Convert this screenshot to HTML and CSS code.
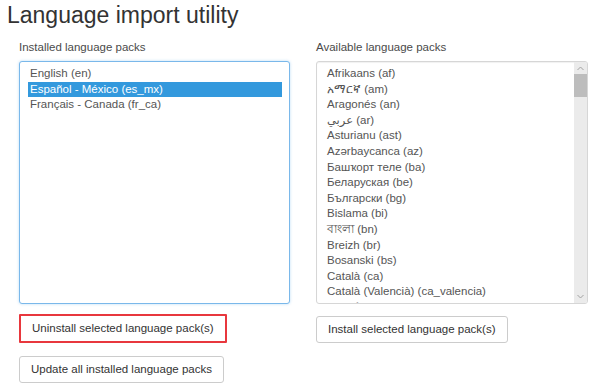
FILE: index.html
```html
<!DOCTYPE html>
<html lang="en">
<head>
<meta charset="utf-8">
<title>Language import utility</title>
<link rel="stylesheet" href="styles.css">
</head>
<body>
<h1 class="title">Language import utility</h1>
<div class="columns">
  <div class="col">
    <div class="label">Installed language packs</div>
    <div class="listbox focused">
      <ul class="options">
        <li>English (en)</li>
        <li class="selected">Español - México (es_mx)</li>
        <li>Français - Canada (fr_ca)</li>
      </ul>
    </div>
    <button class="btn btn-marked">Uninstall selected language pack(s)</button>
    <button class="btn btn-second">Update all installed language packs</button>
  </div>
  <div class="col">
    <div class="label">Available language packs</div>
    <div class="listbox">
      <ul class="options">
        <li>Afrikaans (af)</li>
        <li>አማርኛ (am)</li>
        <li>Aragonés (an)</li>
        <li>عربي (ar)</li>
        <li>Asturianu (ast)</li>
        <li>Azərbaycanca (az)</li>
        <li>Башҡорт теле (ba)</li>
        <li>Беларуская (be)</li>
        <li>Български (bg)</li>
        <li>Bislama (bi)</li>
        <li>বাংলা (bn)</li>
        <li>Breizh (br)</li>
        <li>Bosanski (bs)</li>
        <li>Català (ca)</li>
        <li>Català (Valencià) (ca_valencia)</li>
        <li>کوردی (ckb)</li>
      </ul>
      <div class="scrollbar">
        <svg class="arrow" width="13" height="12" viewBox="0 0 13 12"><polyline points="3.5,8 6.5,5 9.5,8" fill="none" stroke="#a3a3a3" stroke-width="1"/></svg>
        <div class="thumb"></div>
        <div class="track-rest"></div>
        <svg class="arrow" width="13" height="12" viewBox="0 0 13 12"><polyline points="3.5,4 6.5,7 9.5,4" fill="none" stroke="#a3a3a3" stroke-width="1"/></svg>
      </div>
    </div>
    <button class="btn btn-install">Install selected language pack(s)</button>
  </div>
</div>
</body>
</html>
```
FILE: styles.css
```css
html, body {
  margin: 0;
  padding: 0;
  background: #ffffff;
}

body {
  font-family: "Liberation Sans", Arial, "Noto Sans", "DejaVu Sans", sans-serif;
  color: #333333;
  width: 600px;
  height: 392px;
  overflow: hidden;
}

.title {
  margin: 0;
  padding: 1px 0 0 7px;
  font-size: 23px;
  font-weight: normal;
  line-height: 28px;
  height: 39px;
  color: #333333;
}

.columns {
  display: grid;
  grid-template-columns: 271px 272px;
  column-gap: 26px;
  padding-left: 19px;
}

.col {
  display: flex;
  flex-direction: column;
  align-items: flex-start;
}

.label {
  font-size: 11.5px;
  line-height: 14px;
  color: #4a4a4a;
  margin-bottom: 7px;
}

.listbox {
  box-sizing: border-box;
  width: 100%;
  height: 243px;
  border: 1px solid #d6d6d6;
  border-radius: 3px;
  box-shadow: inset 0 1px 1px rgba(0, 0, 0, 0.06);
  display: flex;
  overflow: hidden;
  background: #fff;
}

.listbox.focused {
  border-color: #7ab8ea;
  box-shadow: 0 0 3px rgba(102, 175, 233, 0.45);
}

.options {
  list-style: none;
  margin: 0;
  padding: 4px 7px 0 8px;
  flex: 1;
  min-width: 0;
  overflow: hidden;
  font-size: 11.5px;
  line-height: 15.6px;
  color: #555555;
}

.options li {
  padding-left: 2px;
  white-space: nowrap;
}

.options li.selected {
  background: #3399dd;
  color: #ffffff;
}

.scrollbar {
  width: 13px;
  flex: none;
  background: #ebebeb;
  display: flex;
  flex-direction: column;
}

.arrow {
  display: block;
  flex: none;
}

.thumb {
  height: 23px;
  background: #bdbdbd;
  flex: none;
}

.track-rest {
  flex: 1;
}

.btn {
  font-family: inherit;
  font-size: 11.5px;
  line-height: 13px;
  color: #333333;
  background: #ffffff;
  border: 1px solid #cccccc;
  border-radius: 3px;
  padding: 6px 11px;
  margin: 0;
  cursor: pointer;
}

.btn-marked {
  border: 2px solid #e8373d;
  border-radius: 1px;
  margin-top: 10px;
}

.btn-second {
  margin-top: 13px;
}

.btn-install {
  margin-top: 12px;
}
```
